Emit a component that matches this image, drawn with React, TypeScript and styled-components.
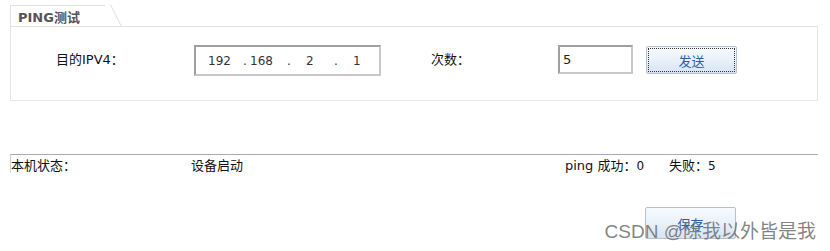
import React from "react";
import styled, { createGlobalStyle } from "styled-components";

const GlobalStyle = createGlobalStyle`
  body {
    margin: 0;
    background: #ffffff;
    font-family: "DejaVu Sans", "Noto Sans CJK SC", sans-serif;
    font-size: 13px;
    color: #000;
  }
`;

const Page = styled.div`
  position: relative;
  width: 830px;
  height: 251px;
  padding: 5px 12px 0 10px;
  box-sizing: border-box;
  overflow: hidden;
`;

const Tab = styled.div`
  position: relative;
  width: 95px;
  height: 21px;
  border-top: 1px solid #e2e2e2;
  border-left: 1px solid #e2e2e2;
  box-sizing: border-box;
  padding: 4px 0 0 7px;
  font-size: 13px;
  font-weight: bold;
  color: #555;
  line-height: 15px;

  &::after {
    content: "";
    position: absolute;
    top: -1px;
    right: -6px;
    width: 1px;
    height: 24px;
    background: #e2e2e2;
    transform: rotate(-27deg);
    transform-origin: top left;
  }
`;

const Panel = styled.div`
  height: 75px;
  border: 1px solid #e6e6e6;
  border-top-color: #e2e2e2;
  box-sizing: border-box;
  display: flex;
  align-items: flex-start;
  padding: 18px 0 0 45px;
`;

const Label = styled.span<{ $width: number; $indent?: number }>`
  width: ${(p) => p.$width}px;
  padding-left: ${(p) => p.$indent ?? 0}px;
  line-height: 30px;
  font-size: 13px;
  color: #111;
`;

const IpBox = styled.div`
  width: 187px;
  height: 31px;
  border: 2px solid #a0a0a0;
  border-right-color: #c8c8c8;
  border-bottom-color: #c8c8c8;
  box-sizing: border-box;
  display: flex;
  align-items: center;
  padding-left: 12px;
  font-size: 12px;
  color: #333;
`;

const Segment = styled.span<{ $width: number }>`
  width: ${(p) => p.$width}px;
  flex-shrink: 0;
`;

const CountBox = styled.div`
  width: 75px;
  height: 29px;
  border: 2px solid #a0a0a0;
  border-right-color: #c8c8c8;
  border-bottom-color: #c8c8c8;
  box-sizing: border-box;
  padding-left: 3px;
  line-height: 25px;
  font-size: 13px;
  color: #222;
  margin-right: 13px;
`;

const Button = styled.div<{ $focused?: boolean }>`
  position: relative;
  width: 91px;
  height: ${(p) => (p.$focused ? 28 : 32)}px;
  border: 1px solid #b7c1cd;
  border-radius: 2px;
  box-sizing: border-box;
  background: linear-gradient(#f7fafd, #e9f1fa 50%, #d6e4f4);
  display: flex;
  justify-content: center;
  align-items: center;
  font-size: 13px;
  color: #2a5ea3;
  margin-top: 1px;

  &::before {
    content: "";
    display: ${(p) => (p.$focused ? "block" : "none")};
    position: absolute;
    inset: 1px;
    border: 1px dotted #333;
  }
`;

const StatusRow = styled.div`
  margin-top: 53px;
  height: 18px;
  border-top: 1px solid #aaaaaa;
  border-left: 1px solid #d0d0d0;
  display: flex;
  align-items: center;
  font-size: 13px;
  color: #111;
`;

const StatusCell = styled.span<{ $width: number }>`
  width: ${(p) => p.$width}px;
  flex-shrink: 0;
  white-space: nowrap;
`;

const Num = styled.span`
  font-size: 12px;
`;

const Footer = styled.div`
  display: flex;
  justify-content: flex-end;
  padding: 33px 82px 0 0;
`;

const Watermark = styled.div`
  position: absolute;
  right: 14px;
  bottom: 8px;
  font-family: "Liberation Sans", "Noto Sans CJK SC", sans-serif;
  font-size: 19px;
  color: rgba(110, 110, 110, 0.85);
  white-space: nowrap;
`;

const octets: [string, number][] = [
  ["192", 35],
  [".", 7],
  ["168", 37],
  [".", 19],
  ["2", 28],
  [".", 19],
  ["1", 10],
];

export default function App() {
  return (
    <>
      <GlobalStyle />
      <Page>
        <Tab>PING测试</Tab>
        <Panel>
          <Label $width={138}>目的IPV4：</Label>
          <IpBox>
            {octets.map(([text, w], i) => (
              <Segment key={i} $width={w}>
                {text}
              </Segment>
            ))}
          </IpBox>
          <Label $width={127} $indent={50}>
            次数：
          </Label>
          <CountBox>5</CountBox>
          <Button $focused>发送</Button>
        </Panel>
        <StatusRow>
          <StatusCell $width={180}>本机状态：</StatusCell>
          <StatusCell $width={374}>设备启动</StatusCell>
          <StatusCell $width={104}>
            ping 成功：<Num>0</Num>
          </StatusCell>
          <StatusCell $width={80}>
            失败：<Num>5</Num>
          </StatusCell>
        </StatusRow>
        <Footer>
          <Button>保存</Button>
        </Footer>
        <Watermark>CSDN @除我以外皆是我</Watermark>
      </Page>
    </>
  );
}
